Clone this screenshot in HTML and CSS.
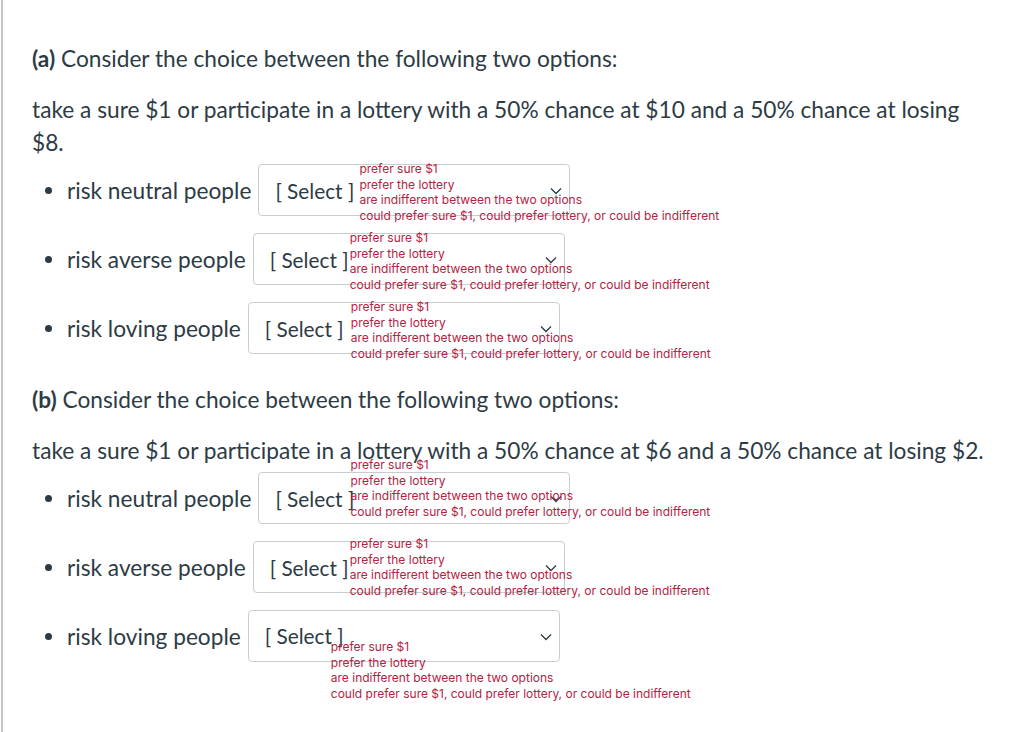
FILE: index.html
```html
<!DOCTYPE html>
<html>
<head>
<meta charset="utf-8">
<link rel="stylesheet" href="styles.css">
</head>
<body>
<div class="page">
  <p class="q q-head"><b>(a)</b> Consider the choice between the following two options:</p>
  <p class="q q-text">take a sure $1 or participate in a lottery with a 50% chance at $10 and a 50% chance at losing $8.</p>
  <ul class="items items-a">
    <li class="item"><span class="dot"></span><span class="label">risk neutral people</span>
      <div class="sel">
        <span class="sel-text">[ Select ]</span>
        <svg class="chev" width="12" height="8" viewBox="0 0 12 8"><path d="M1 1.5 L6 6.5 L11 1.5" fill="none" stroke="#2d3b45" stroke-width="1.3"/></svg>
        <div class="opts o-a1"><div>prefer sure $1</div><div>prefer the lottery</div><div>are indifferent between the two options</div><div>could prefer sure $1, could prefer lottery, or could be indifferent</div></div>
      </div>
    </li>
    <li class="item"><span class="dot"></span><span class="label">risk averse people</span>
      <div class="sel">
        <span class="sel-text">[ Select ]</span>
        <svg class="chev" width="12" height="8" viewBox="0 0 12 8"><path d="M1 1.5 L6 6.5 L11 1.5" fill="none" stroke="#2d3b45" stroke-width="1.3"/></svg>
        <div class="opts o-a2"><div>prefer sure $1</div><div>prefer the lottery</div><div>are indifferent between the two options</div><div>could prefer sure $1, could prefer lottery, or could be indifferent</div></div>
      </div>
    </li>
    <li class="item"><span class="dot"></span><span class="label">risk loving people</span>
      <div class="sel">
        <span class="sel-text">[ Select ]</span>
        <svg class="chev" width="12" height="8" viewBox="0 0 12 8"><path d="M1 1.5 L6 6.5 L11 1.5" fill="none" stroke="#2d3b45" stroke-width="1.3"/></svg>
        <div class="opts o-a3"><div>prefer sure $1</div><div>prefer the lottery</div><div>are indifferent between the two options</div><div>could prefer sure $1, could prefer lottery, or could be indifferent</div></div>
      </div>
    </li>
  </ul>
  <p class="q q-head q-b"><b>(b)</b> Consider the choice between the following two options:</p>
  <p class="q q-text">take a sure $1 or participate in a lottery with a 50% chance at $6 and a 50% chance at losing $2.</p>
  <ul class="items items-b">
    <li class="item"><span class="dot"></span><span class="label">risk neutral people</span>
      <div class="sel">
        <span class="sel-text">[ Select ]</span>
        <svg class="chev" width="12" height="8" viewBox="0 0 12 8"><path d="M1 1.5 L6 6.5 L11 1.5" fill="none" stroke="#2d3b45" stroke-width="1.3"/></svg>
        <div class="opts o-b1"><div>prefer sure $1</div><div>prefer the lottery</div><div>are indifferent between the two options</div><div>could prefer sure $1, could prefer lottery, or could be indifferent</div></div>
      </div>
    </li>
    <li class="item"><span class="dot"></span><span class="label">risk averse people</span>
      <div class="sel">
        <span class="sel-text">[ Select ]</span>
        <svg class="chev" width="12" height="8" viewBox="0 0 12 8"><path d="M1 1.5 L6 6.5 L11 1.5" fill="none" stroke="#2d3b45" stroke-width="1.3"/></svg>
        <div class="opts o-b2"><div>prefer sure $1</div><div>prefer the lottery</div><div>are indifferent between the two options</div><div>could prefer sure $1, could prefer lottery, or could be indifferent</div></div>
      </div>
    </li>
    <li class="item"><span class="dot"></span><span class="label">risk loving people</span>
      <div class="sel">
        <span class="sel-text sel-text-top">[ Select ]</span>
        <svg class="chev" width="12" height="8" viewBox="0 0 12 8"><path d="M1 1.5 L6 6.5 L11 1.5" fill="none" stroke="#2d3b45" stroke-width="1.3"/></svg>
        <div class="opts o-b3"><div>prefer sure $1</div><div>prefer the lottery</div><div>are indifferent between the two options</div><div>could prefer sure $1, could prefer lottery, or could be indifferent</div></div>
      </div>
    </li>
  </ul>
</div>
</body>
</html>
```
FILE: styles.css
```css
html, body {
  margin: 0;
  padding: 0;
  background: #ffffff;
}
.page {
  margin-left: 1px;
  border-left: 2px solid #c6c6c6;
  height: 732px;
  box-sizing: border-box;
  padding: 42px 40px 0 29px;
  font-family: Lato, "Liberation Sans", sans-serif;
  font-size: 22.7px;
  color: #2d3b45;
}
.q {
  margin: 0;
  line-height: 33px;
}
.q-head b {
  font-weight: 700;
}
.q-text {
  margin-top: 18px;
}
.q-b {
  margin-top: 29px;
}
.items {
  list-style: none;
  margin: 0;
  padding: 0;
  display: flex;
  flex-direction: column;
  gap: 17px;
}
.items-a {
  margin-top: 5px;
}
.items-b {
  margin-top: 5px;
}
.item {
  display: flex;
  align-items: center;
  height: 52px;
}
.dot {
  width: 7px;
  height: 7px;
  border-radius: 50%;
  background: #2d3b45;
  margin-left: 13px;
  margin-right: 15px;
  flex: none;
}
.label {
  margin-right: 7px;
  white-space: nowrap;
}
.sel {
  position: relative;
  width: 312px;
  height: 52px;
  box-sizing: border-box;
  border: 1px solid #c7cdd1;
  border-radius: 4px;
  display: flex;
  align-items: center;
  padding-left: 16px;
  background: #fff;
  font-size: 20.8px;
}
.sel-text {
  white-space: nowrap;
}
.sel-text-top {
  position: relative;
  top: -1px;
}
.chev {
  position: absolute;
  right: 7px;
  top: 22px;
}
.opts {
  position: absolute;
  font-family: Inter, "Noto Sans", sans-serif;
  font-size: 12px;
  line-height: 15.6px;
  color: #b3223f;
  white-space: nowrap;
}
.o-a1 { left: 100px; top: -4px; }
.o-a2 { left: 96px; top: -4px; }
.o-a3 { left: 102px; top: -4px; }
.o-b1 { left: 91px; top: -16px; }
.o-b2 { left: 96px; top: -6px; }
.o-b3 { left: 82px; top: 28px; }
```
